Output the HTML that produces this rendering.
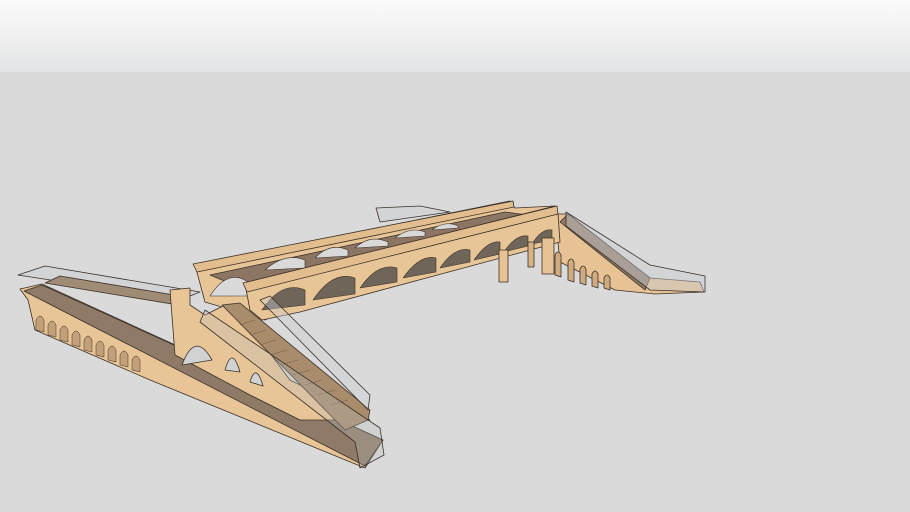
<!DOCTYPE html>
<html><head><style>
html,body{margin:0;padding:0;width:910px;height:512px;overflow:hidden;background:#dadada}
</style></head><body>
<svg width="910" height="512" viewBox="0 0 910 512" xmlns="http://www.w3.org/2000/svg">
<defs>
<linearGradient id="sky" x1="0" y1="0" x2="0" y2="1">
<stop offset="0" stop-color="#fbfbfb"/><stop offset="1" stop-color="#e3e4e5"/>
</linearGradient>
</defs>
<rect x="0" y="0" width="910" height="72" fill="url(#sky)"/>
<rect x="0" y="72" width="910" height="440" fill="#dadada"/>
<g stroke="#3a3028" stroke-width="0.8" stroke-linejoin="round">
<!-- right stair -->
<polygon points="555,214 568,214 650,278 700,282 704,292 655,294 615,290 560,262" fill="#e6c295"/>
<polygon points="560,222 568,214 650,278 645,290" fill="#8f7a66"/>
<polygon points="566,212 650,265 705,276 705,292 650,290 566,226" fill="#c9cdd0" fill-opacity="0.45"/>
<g fill="#d0ab7e"><path d="M555,275 v-20 q3,-6 6,0 v22Z"/><path d="M568,280 v-18 q3,-6 6,0 v20Z"/><path d="M580,283 v-14 q3,-6 6,0 v16Z"/><path d="M592,286 v-12 q3,-6 6,0 v14Z"/><path d="M604,288 v-10 q3,-6 6,0 v12Z"/></g>
<!-- back upper walkway -->
<polygon points="376,208 420,206 450,212 380,222" fill="#c9cdd0" fill-opacity="0.5"/>
<!-- bridge body -->
<polygon points="195,265 510,201 515,208 555,206 558,240 280,312 265,320 205,302" fill="#e8c597"/>
<polygon points="210,275 505,212 550,218 552,240 270,300" fill="#8c7663"/>
<g fill="#d9d9d9" stroke-width="0.6">
<path d="M210,296 Q228,268 248,282 L248,296Z"/>
<path d="M265,270 Q285,252 305,260 L305,268Z"/>
<path d="M315,258 Q330,242 348,250 L348,256Z"/>
<path d="M355,248 Q370,234 388,242 L388,246Z"/>
<path d="M395,238 Q410,226 425,232 L425,236Z"/>
<path d="M432,230 Q445,220 458,226 L458,228Z"/>
</g>
<polygon points="193,264 513,201 514,207 197,272" fill="#e2bd8d"/>
<!-- front arcade -->
<polygon points="245,284 555,206 558,214 560,242 300,312 262,320 250,310" fill="#e8c597"/>
<g fill="#6f6558" stroke-width="0.6">
<path d="M262,310 Q282,280 305,290 L305,305Z"/>
<path d="M313,300 Q333,270 355,278 L355,294Z"/>
<path d="M360,288 Q378,262 397,268 L397,282Z"/>
<path d="M403,278 Q420,254 436,258 L436,272Z"/>
<path d="M440,268 Q455,246 470,250 L470,262Z"/>
<path d="M474,260 Q488,240 500,242 L500,254Z"/>
<path d="M504,252 Q516,234 528,236 L528,246Z"/>
<path d="M532,244 Q542,228 552,230 L552,240Z"/>
</g>
<polygon points="243,283 557,206 558,214 247,292" fill="#e2bd8d"/>
<rect x="499" y="250" width="9" height="32" fill="#e6c295"/>
<rect x="528" y="242" width="6" height="25" fill="#d8b485"/>
<rect x="542" y="238" width="12" height="36" fill="#e6c295"/>
<!-- left upper platform -->
<polygon points="18,275 45,266 200,292 180,300" fill="#c9cdd0" fill-opacity="0.5"/>
<polygon points="45,283 60,276 180,296 178,305" fill="#a08b75"/>
<!-- left ramp tan side -->
<polygon points="20,289 42,284 383,440 365,468 150,380 35,330 28,300" fill="#e8c597"/>
<polygon points="24,291 42,285 383,440 365,466" fill="#8e7a67"/>
<!-- central tower wall -->
<polygon points="170,290 190,288 190,305 205,315 225,305 245,320 290,380 370,420 300,420 250,395 175,355" fill="#e8c597"/>
<path d="M182,365 Q195,330 212,360 Z" fill="#d0d2d3"/>
<path d="M225,370 Q232,345 240,372 Z" fill="#d0d2d3"/>
<path d="M250,382 Q256,362 263,386 Z" fill="#d0d2d3"/>
<!-- stairs -->
<polygon points="222,305 240,303 370,410 368,420 345,430" fill="#a88c6c"/>
<g stroke="#6d5a45" stroke-width="0.5">
<line x1="240" y1="325" x2="255" y2="320"/><line x1="250" y1="335" x2="266" y2="330"/><line x1="260" y1="345" x2="276" y2="340"/><line x1="270" y1="355" x2="287" y2="350"/><line x1="280" y1="365" x2="298" y2="360"/><line x1="292" y1="375" x2="310" y2="370"/><line x1="305" y1="385" x2="322" y2="380"/><line x1="318" y1="395" x2="335" y2="390"/><line x1="330" y1="405" x2="348" y2="400"/>
</g>
<polygon points="260,300 270,296 370,395 368,410" fill="#c9cdd0" fill-opacity="0.4"/>
<polygon points="205,310 380,428 384,455 360,468 355,442 200,322" fill="#b9bcbe" fill-opacity="0.3"/>
<!-- left arches -->
<g fill="#c4a07a" stroke-width="0.5">
<path d="M36,330 l0,-10 q4,-8 8,0 l0,12Z"/><path d="M48,335 l0,-10 q4,-8 8,0 l0,12Z"/><path d="M60,340 l0,-10 q4,-8 8,0 l0,12Z"/><path d="M72,345 l0,-10 q4,-8 8,0 l0,12Z"/><path d="M84,350 l0,-10 q4,-8 8,0 l0,12Z"/><path d="M96,355 l0,-10 q4,-8 8,0 l0,12Z"/><path d="M108,360 l0,-10 q4,-8 8,0 l0,12Z"/><path d="M120,365 l0,-10 q4,-8 8,0 l0,12Z"/><path d="M132,370 l0,-10 q4,-8 8,0 l0,12Z"/>
</g>
</g>
</svg>
</body></html>
